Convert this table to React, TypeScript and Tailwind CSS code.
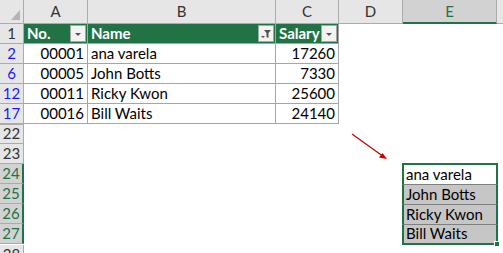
import React from 'react';

// Excel-ish sheet: filtered table + pasted visible cells in column E

const FONT = { fontFamily: 'Lato, "Open Sans", sans-serif' };

type Row = {
  n: string;
  kind?: 'head' | 'data' | 'empty';
  a?: string;
  b?: string;
  c?: string;
  e?: string;
  eIdx?: number;
  filtered?: boolean;
};

const rows: Row[] = [
  { n: '1', kind: 'head' },
  { n: '2', kind: 'data', a: '00001', b: 'ana varela', c: '17260', filtered: true },
  { n: '6', kind: 'data', a: '00005', b: 'John Botts', c: '7330', filtered: true },
  { n: '12', kind: 'data', a: '00011', b: 'Ricky Kwon', c: '25600', filtered: true },
  { n: '17', kind: 'data', a: '00016', b: 'Bill Waits', c: '24140', filtered: true },
  { n: '22' },
  { n: '23' },
  { n: '24', e: 'ana varela', eIdx: 0 },
  { n: '25', e: 'John Botts', eIdx: 1 },
  { n: '26', e: 'Ricky Kwon', eIdx: 2 },
  { n: '27', e: 'Bill Waits', eIdx: 3 },
  { n: '28' },
];

function FilterButton({ funnel = false }: { funnel?: boolean }) {
  return (
    <div className="w-[16px] h-[17px] bg-[#f3f3f3] border border-[#a6a6a6] flex items-center justify-center">
      <svg width="12" height="10" viewBox="0 0 12 10">
        {funnel ? (
          <>
            <path d="M1 7 L5 7 L3 9 Z" fill="#555" />
            <path d="M4 1 L11 1 L8.5 4 L8.5 9 L6.5 8 L6.5 4 Z" fill="#555" />
          </>
        ) : (
          <path d="M3 4 L9 4 L6 7 Z" fill="#555" />
        )}
      </svg>
    </div>
  );
}

function ColHeader() {
  const hdr = 'h-[24px] border-r border-b border-[#ababab] flex items-center justify-center text-[15px] text-[#333] bg-[#e6e6e6]';
  return (
    <div className="flex">
      <div className="w-[24px] h-[24px] border-r border-b border-[#ababab] bg-[#e6e6e6] flex items-end justify-end pr-[3px] pb-[3px]">
        <svg width="9" height="10" viewBox="0 0 9 10">
          <path d="M9 0 L9 10 L0 10 Z" fill="#b4b4b4" />
        </svg>
      </div>
      <div className={`w-[64px] ${hdr}`}>A</div>
      <div className={`w-[188px] ${hdr}`}>B</div>
      <div className={`w-[63px] ${hdr}`}>C</div>
      <div className={`w-[64px] ${hdr}`}>D</div>
      <div className="w-[94px] h-[24px] border-r border-[#ababab] border-b-2 border-b-[#217346] flex items-center justify-center text-[15px] text-[#217346] bg-[#d2d2d2]">
        E
      </div>
      <div className="flex-1 h-[24px] border-b border-[#ababab] bg-[#e6e6e6]" />
    </div>
  );
}

function RowHeader({ row }: { row: Row }) {
  const sel = row.eIdx !== undefined;
  return (
    <div
      className={`w-[24px] h-[20px] shrink-0 flex items-end justify-center pb-[1px] text-[15px] leading-[18px] border-b border-[#ababab] ${
        sel ? 'bg-[#d2d2d2] text-[#217346] border-r-2 border-r-[#217346]' : 'bg-[#e6e6e6] border-r border-r-[#ababab]'
      } ${row.filtered ? 'text-[#1a1aff]' : ''} ${!sel && !row.filtered ? 'text-[#333]' : ''} ${
        row.n === '22' ? 'border-t border-t-[#ababab] h-[20px]' : ''
      }`}
    >
      {row.n}
    </div>
  );
}

function SheetRow({ row }: { row: Row }) {
  const cell = 'h-[20px] flex items-end pb-[1px] px-[3px] text-[15px] leading-[18px] text-black';
  if (row.kind === 'head') {
    const h = 'h-[20px] bg-[#217346] text-white font-bold flex items-center text-[15px] border-r border-b border-[#a6a6a6]';
    return (
      <div className="flex">
        <RowHeader row={row} />
        <div className={`w-[64px] ${h} justify-between pl-[3px] pr-[1px]`}>
          <span>No.</span>
          <FilterButton />
        </div>
        <div className={`w-[188px] ${h} justify-between pl-[3px] pr-[1px]`}>
          <span>Name</span>
          <FilterButton funnel />
        </div>
        <div className={`w-[63px] ${h} justify-between pl-[3px] pr-[1px]`}>
          <span>Salary</span>
          <FilterButton />
        </div>
        <div className="flex-1" />
      </div>
    );
  }
  if (row.kind === 'data') {
    const d = `${cell} border-r border-b border-[#a6a6a6]`;
    return (
      <div className="flex">
        <RowHeader row={row} />
        <div className={`w-[64px] ${d} justify-end`}>{row.a}</div>
        <div className={`w-[188px] ${d}`}>{row.b}</div>
        <div className={`w-[63px] ${d} justify-end`}>{row.c}</div>
        <div className="flex-1" />
      </div>
    );
  }
  const idx = row.eIdx;
  return (
    <div className="flex">
      <RowHeader row={row} />
      <div className="w-[64px] h-[20px]" />
      <div className="w-[188px] h-[20px]" />
      <div className="w-[63px] h-[20px]" />
      <div className="w-[63px] h-[20px]" />
      {idx !== undefined ? (
        <div
          className={`relative w-[96px] h-[20px] border-x-2 border-[#217346] ${idx === 0 ? 'border-t-2 h-[21px] -mt-[1px] bg-white' : 'bg-[#c6c6c6] border-t border-t-[#7f7f7f]'} ${
            idx === 3 ? 'border-b-2 h-[21px]' : ''
          } ${cell} pl-[2px]`}
        >
          {row.e}
          {idx === 3 && (
            <div className="absolute -right-[4px] -bottom-[4px] w-[6px] h-[6px] bg-[#217346] border border-white" />
          )}
        </div>
      ) : (
        <div className="w-[96px] h-[20px]" />
      )}
      <div className="flex-1" />
    </div>
  );
}

export default function App() {
  return (
    <div className="relative w-[503px] h-[253px] overflow-hidden bg-white select-none" style={FONT}>
      <ColHeader />
      {rows.map((r) => (
        <SheetRow key={r.n} row={r} />
      ))}
      {/* red pointer arrow */}
      <svg className="absolute left-[348px] top-[130px]" width="44" height="34" viewBox="0 0 44 34">
        <line x1="4" y1="4" x2="36" y2="27" stroke="#c00000" strokeWidth="1.2" />
        <path d="M39 29 L31 27.5 L34.5 23 Z" fill="#c00000" />
      </svg>
    </div>
  );
}
